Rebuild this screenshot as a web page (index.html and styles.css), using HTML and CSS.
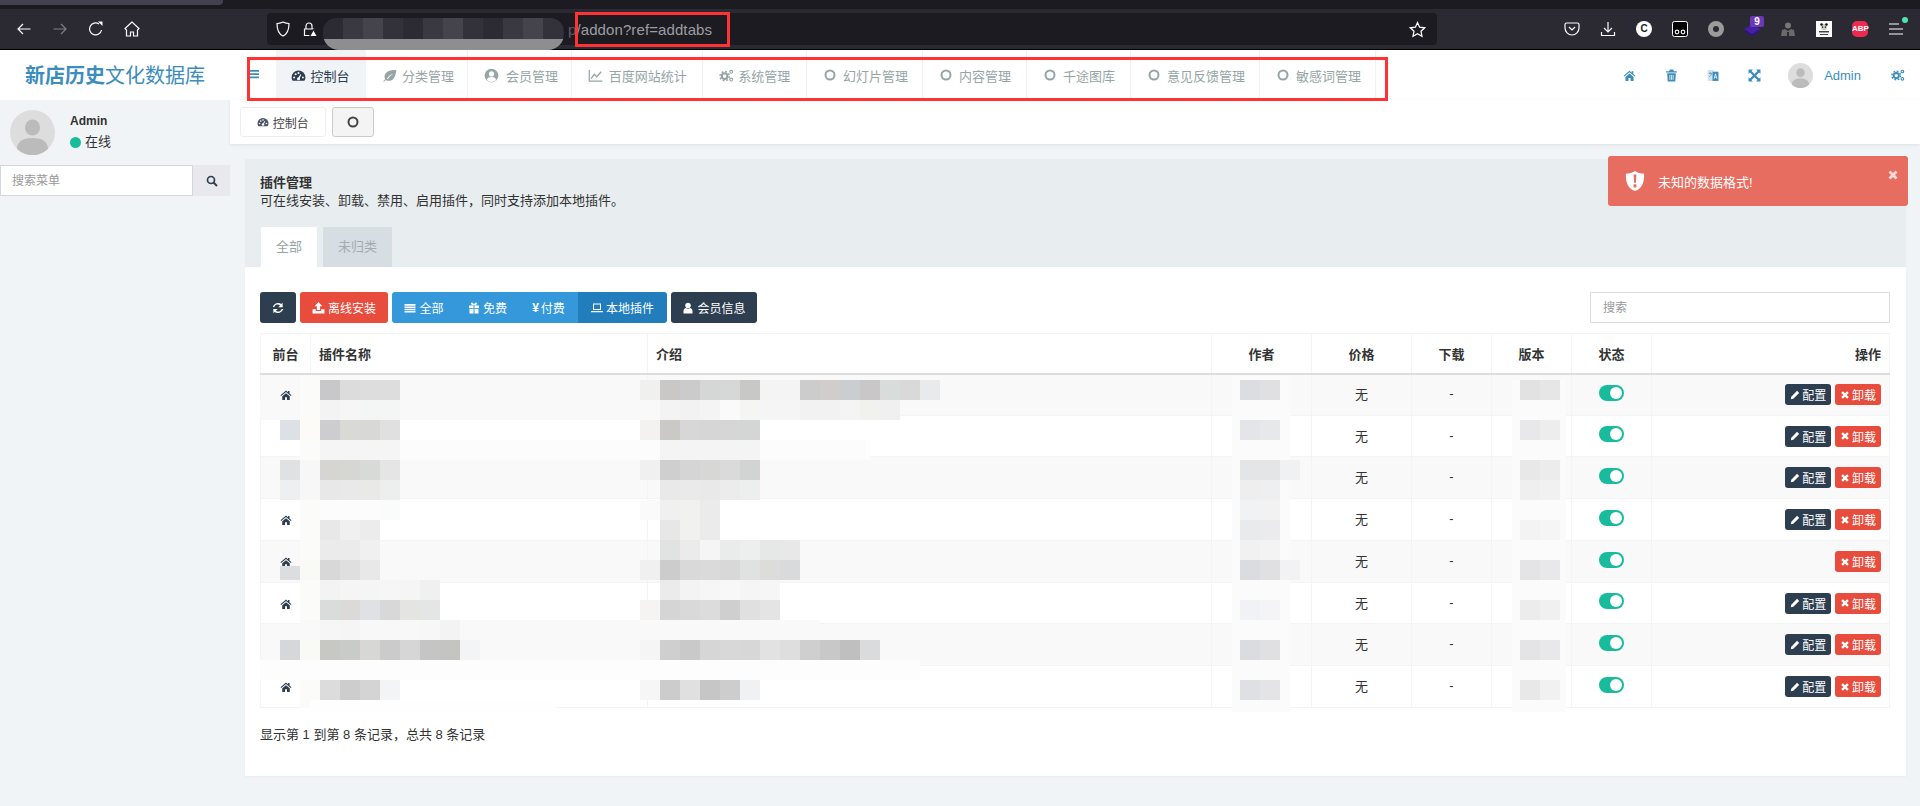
FILE: index.html
```html
<!DOCTYPE html>
<html lang="zh-CN">
<head>
    <meta charset="UTF-8">
    <title>插件管理</title>
    <link rel="stylesheet" href="styles.css">
</head>
<body>
    <!-- icon sprites -->
    <svg class="sprites" xmlns="http://www.w3.org/2000/svg">
        <symbol id="i-dashboard" viewBox="0 0 24 24"><path d="M12 4A11 11 0 0 0 1 15c0 2.300.7 4.200 1.800 5.500h18.400C22.300 19.200 23 17.300 23 15A11 11 0 0 0 12 4z"/><g fill="#fff"><circle cx="5" cy="15" r="1.600"/><circle cx="7.500" cy="10" r="1.600"/><circle cx="12" cy="8" r="1.600"/><circle cx="19" cy="15" r="1.600"/><circle cx="12" cy="17" r="2.400"/><path d="M11 17l4-7 1.500.7L13 18z"/></g></symbol>
        <symbol id="i-leaf" viewBox="0 0 24 24"><path d="M23 3C12 3 4 6 4 14c0 1.500.4 2.800 1 4l-3 3 1 1 3-3c1.500 1 3.200 1.500 5 1.500C19 20.500 22 12 23 3zM8 17c2-4 5-6.500 10-8-4 2.500-7 5-8.500 9z"/></symbol>
        <symbol id="i-user-circle" viewBox="0 0 24 24"><circle cx="12" cy="12" r="11"/><circle cx="12" cy="9.500" r="4.200" fill="#fff"/><path d="M4.500 19c1-3.500 4-4.500 7.500-4.500s6.500 1 7.500 4.500a10 10 0 0 1-15 0z" fill="#fff"/></symbol>
        <symbol id="i-chart" viewBox="0 0 24 24"><path d="M1 3h2v17h20v2H1z"/><path d="M5 17l5-7 4 4 7-8" fill="none" stroke="currentColor" stroke-width="2.200"/></symbol>
        <symbol id="i-cogs" viewBox="0 0 24 24"><g fill="none" stroke="currentColor"><circle cx="9" cy="13" r="4.500" stroke-width="3.200"/><circle cx="9" cy="13" r="7.400" stroke-width="2.400" stroke-dasharray="3 2.800"/><circle cx="19.500" cy="6" r="2.300" stroke-width="1.800"/><circle cx="19.500" cy="18.500" r="2.300" stroke-width="1.800"/></g></symbol>
        <symbol id="i-circle" viewBox="0 0 24 24"><circle cx="12" cy="12" r="9" fill="none" stroke="currentColor" stroke-width="4"/></symbol>
        <symbol id="i-home" viewBox="0 0 24 24"><path d="M12 3 1 12.500l1.300 1.500L12 6l9.700 8 1.300-1.500-4-3.400V4h-3v2.700z"/><path d="M4.500 14.700V22H10v-5.500h4V22h5.500v-7.300L12 8.300z"/></symbol>
        <symbol id="i-trash" viewBox="0 0 24 24"><path d="M9 1h6l1.500 3H22v2.500H2V4h5.500zM4 8h16l-1 15H5z"/><path d="M9 11v9M12 11v9M15 11v9" stroke="#fff" stroke-width="1.400"/></symbol>
        <symbol id="i-translate" viewBox="0 0 24 24"><path d="M3 2h11l5 20H8l-5-1z" fill="#cfe2ef"/><path d="M12 5h11v17H12z"/><path d="M15 18l2.500-9 2.500 9M16 15h3" fill="none" stroke="#fff" stroke-width="1.400"/><path d="M5 8h6M8 6v2M6 14c2.500-1 4-3 4-6" fill="none" stroke="#3c8dbc" stroke-width="1.300"/></symbol>
        <symbol id="i-expand" viewBox="0 0 24 24"><path d="M1 1h8L6.500 3.500 12 9l5.500-5.500L15 1h8v8l-2.500-2.500L15 12l5.500 5.500L23 15v8h-8l2.500-2.500L12 15l-5.500 5.500L9 23H1v-8l2.500 2.500L9 12 3.500 6.500 1 9z"/></symbol>
        <symbol id="i-refresh" viewBox="0 0 24 24"><path d="M20 3v7.500h-7.500l3-3a6 6 0 0 0-9.800 2.800H3A9.500 9.500 0 0 1 17.800 5.200zM4 21v-7.500h7.500l-3 3a6 6 0 0 0 9.800-2.800H21A9.500 9.500 0 0 1 6.200 18.800z"/></symbol>
        <symbol id="i-upload" viewBox="0 0 24 24"><path d="M12 2l7 7.500h-4v7H9v-7H5z"/><path d="M1 15h6v3.500h10V15h6v8H1z"/></symbol>
        <symbol id="i-list" viewBox="0 0 24 24"><path d="M1 4h22v3.500H1zM1 9h22v3H1zM1 13.500h22v3H1zM1 18h22v3H1z"/></symbol>
        <symbol id="i-gift" viewBox="0 0 24 24"><path d="M2 7h9v5H2zM13 7h9v5h-9zM3 13.500h8V23H3zM13 13.500h8V23h-8z"/><path d="M8 1c2 0 3.500 2 4 5 .5-3 2-5 4-5s3 2 1 4l-1.500 1.500h-7L7 5C5 3 6 1 8 1z"/></symbol>
        <symbol id="i-laptop" viewBox="0 0 24 24"><path d="M4 3h16v13H4zm2 2v9h12V5zM0 18h24v2.500H0z" fill-rule="evenodd"/></symbol>
        <symbol id="i-user" viewBox="0 0 24 24"><circle cx="12" cy="7" r="5.500"/><path d="M3 23v-5c0-3.500 2.500-5.500 5-6 2.500 2 5.500 2 8 0 2.500.5 5 2.500 5 6v5z"/></symbol>
        <symbol id="i-pencil" viewBox="0 0 24 24"><path d="M17 2l5 5L8 21l-6 1 1-6z"/></symbol>
        <symbol id="i-times" viewBox="0 0 24 24"><path d="M7 3l5 5 5-5 4 4-5 5 5 5-4 4-5-5-5 5-4-4 5-5-5-5z"/></symbol>
        <symbol id="i-search" viewBox="0 0 24 24"><circle cx="10" cy="10" r="7" fill="none" stroke="currentColor" stroke-width="3.400"/><path d="M15 15l7 7" stroke="currentColor" stroke-width="4"/></symbol>
        <symbol id="i-bars" viewBox="0 0 24 24"><path d="M2 4h20v3.500H2zM2 10.500h20V14H2zM2 17h20v3.500H2z"/></symbol>
        <symbol id="i-shield" viewBox="0 0 24 24"><path d="M12 1c3 2 6 3 10 3 0 10-2 16-10 19C4 20 2 14 2 4c4 0 7-1 10-3z"/></symbol>
    </svg>

    <!-- browser chrome -->
    <div class="browser">
        <div class="tabstrip"><div class="tab-piece"></div></div>
        <div class="toolbar">
            <div class="tool-btn">
                <svg class="ff" viewBox="0 0 16 16"><path d="M14.500 8H2M7 3 2 8l5 5"/></svg>
            </div>
            <div class="tool-btn dim">
                <svg class="ff" viewBox="0 0 16 16"><path d="M1.500 8H14M9 3l5 5-5 5"/></svg>
            </div>
            <div class="tool-btn">
                <svg class="ff" viewBox="0 0 16 16"><path d="M13.500 9A6 6 0 1 1 11 3"/><path d="M10 .5h4.500V5z" class="solid"/></svg>
            </div>
            <div class="tool-btn">
                <svg class="ff" viewBox="0 0 16 16"><path d="M8 1 1 7.500 2.500 9V15h4v-4h3v4h4V9L15 7.500z"/></svg>
            </div>
            <div class="urlbar">
                <svg class="ff url-icon" viewBox="0 0 16 16"><path d="M8 1c2 1 4 1.500 6 1.500C14 9 12.500 13 8 15 3.500 13 2 9 2 2.500 4 2.500 6 2 8 1z"/></svg>
                <svg class="ff url-icon" viewBox="0 0 16 16"><path d="M4 8V5a3 3 0 0 1 6 0v3M2.500 8h9v6.500h-9z"/><path d="M11.500 8.500l4 7h-8z" class="warn"/></svg>
                <div class="url-blur"><div class="url-blur-top"></div><div class="url-blur-low"></div></div>
                <span class="url-text"><span class="url-dim">p</span>/addon?ref=addtabs</span>
                <svg class="ff url-star" viewBox="0 0 16 16"><path d="M8 1.500l2 4.300 4.700.6-3.400 3.200.9 4.700L8 12l-4.200 2.300.9-4.700L1.300 6.400 6 5.800z"/></svg>
            </div>
            <div class="addons">
                <div class="tool-btn"><svg class="ff" viewBox="0 0 16 16"><path d="M2.500 2h11A1.500 1.500 0 0 1 15 3.500V7A7 7 0 0 1 1 7V3.500A1.500 1.500 0 0 1 2.500 2zM5 6l3 3 3-3"/></svg></div>
                <div class="tool-btn"><svg class="ff" viewBox="0 0 16 16"><path d="M8 1v10M4 7l4 4 4-4M1.500 11v3.500h13V11"/></svg></div>
                <div class="tool-btn"><span class="addon-c">C</span></div>
                <div class="tool-btn"><svg viewBox="0 0 16 16" width="16" height="16"><rect x=".5" y=".5" width="15" height="15" rx="2" fill="#000" stroke="#fff"/><g fill="none" stroke="#eee" stroke-width="1.200"><circle cx="5" cy="11" r="1.800"/><circle cx="11" cy="11" r="1.800"/></g></svg></div>
                <div class="tool-btn"><span class="addon-ring"></span></div>
                <div class="tool-btn"><svg viewBox="0 0 16 16" width="16" height="16"><path d="M0 8l8-4 8 4-8 5z" fill="#4420a8"/><path d="M0 10.500l2-1 6 3.500 6-3.500 2 1L8 15z" fill="#30128a"/></svg><span class="addon-badge">9</span></div>
                <div class="tool-btn"><svg viewBox="0 0 16 16" width="16" height="16"><circle cx="8" cy="4.500" r="3" fill="#777"/><path d="M1 15l1-6 3-1 3 2 3-2 3 1 1 6H9V11H7v4z" fill="#6a6a6a"/></svg></div>
                <div class="tool-btn"><svg viewBox="0 0 16 16" width="16" height="16"><rect width="16" height="16" fill="#fff"/><circle cx="8" cy="6" r="3.200" fill="#ccc"/><circle cx="5.500" cy="3.500" r="1.300" fill="#111"/><circle cx="10.500" cy="3.500" r="1.300" fill="#111"/><path d="M6 5.500h1.200v1.200H6zM8.800 5.500H10v1.200H8.800z" fill="#111"/><path d="M3 10h10v1.500H3zM4 13h8v1H4z" fill="#444"/></svg></div>
                <div class="tool-btn"><span class="addon-abp">ABP</span></div>
                <div class="tool-btn"><svg class="ff" viewBox="0 0 16 16"><path d="M1 3h10M1 8h14M1 13h14"/></svg><span class="addon-dot"></span></div>
            </div>
        </div>
    </div>

    <div class="app">
        <aside class="sidebar">
            <div class="logo"><b>新店历史</b>文化数据库</div>
            <div class="user-panel">
                <svg class="avatar-lg" viewBox="0 0 45 45"><circle cx="22.500" cy="22.500" r="22.500" fill="#ddd"/><ellipse cx="22.500" cy="17.500" rx="7.500" ry="8" fill="#bbb"/><path d="M7 39c0-8 7-11 15.500-11S38 31 38 39a22.500 22.500 0 0 1-31 0z" fill="#bbb"/></svg>
                <div class="user-info">
                    <div class="user-name">Admin</div>
                    <div class="user-status"><span class="dot"></span>在线</div>
                </div>
            </div>
            <div class="menu-search">
                <input type="text" placeholder="搜索菜单">
                <button><svg class="icon"><use href="#i-search"/></svg></button>
            </div>
        </aside>

        <main class="main">
            <header class="topbar">
                <div class="toggle"><svg class="icon"><use href="#i-bars"/></svg></div>
                <ul class="nav">
                    <li class="active"><svg class="icon"><use href="#i-dashboard"/></svg>控制台</li>
                    <li><svg class="icon"><use href="#i-leaf"/></svg>分类管理</li>
                    <li class="member"><svg class="icon"><use href="#i-user-circle"/></svg>会员管理</li>
                    <li class="wide"><svg class="icon"><use href="#i-chart"/></svg>百度网站统计</li>
                    <li class="system"><svg class="icon"><use href="#i-cogs"/></svg>系统管理</li>
                    <li class="o"><svg class="icon"><use href="#i-circle"/></svg>幻灯片管理</li>
                    <li class="o four"><svg class="icon"><use href="#i-circle"/></svg>内容管理</li>
                    <li class="o four"><svg class="icon"><use href="#i-circle"/></svg>千途图库</li>
                    <li class="o"><svg class="icon"><use href="#i-circle"/></svg>意见反馈管理</li>
                    <li class="o"><svg class="icon"><use href="#i-circle"/></svg>敏感词管理</li>
                </ul>
                <div class="top-right">
                    <span class="top-btn"><svg class="icon"><use href="#i-home"/></svg></span>
                    <span class="top-btn"><svg class="icon"><use href="#i-trash"/></svg></span>
                    <span class="top-btn"><svg class="icon"><use href="#i-translate"/></svg></span>
                    <span class="top-btn"><svg class="icon"><use href="#i-expand"/></svg></span>
                    <svg class="avatar-sm" viewBox="0 0 45 45"><circle cx="22.500" cy="22.500" r="22.500" fill="#ddd"/><ellipse cx="22.500" cy="17.500" rx="7.500" ry="8" fill="#bbb"/><path d="M7 39c0-8 7-11 15.500-11S38 31 38 39a22.500 22.500 0 0 1-31 0z" fill="#bbb"/></svg>
                    <span class="top-name">Admin</span>
                    <span class="top-cogs"><svg class="icon"><use href="#i-cogs"/></svg></span>
                </div>
            </header>

            <div class="pagetabs">
                <div class="pagetab"><svg class="icon"><use href="#i-dashboard"/></svg>控制台</div>
                <div class="pagetab current"><svg class="icon"><use href="#i-circle"/></svg></div>
            </div>

            <section class="panel">
                <div class="panel-head">
                    <div class="panel-title">插件管理</div>
                    <div class="panel-desc">可在线安装、卸载、禁用、启用插件&#xFF0C;同时支持添加本地插件。</div>
                    <div class="panel-tabs">
                        <div class="panel-tab active">全部</div>
                        <div class="panel-tab">未归类</div>
                    </div>
                </div>
                <div class="panel-body">
                    <div class="actions">
                        <button class="btn btn-dark btn-refresh"><svg class="icon"><use href="#i-refresh"/></svg></button>
                        <button class="btn btn-red"><svg class="icon"><use href="#i-upload"/></svg>离线安装</button>
                        <div class="btn-group">
                            <button class="btn btn-blue"><svg class="icon"><use href="#i-list"/></svg>全部</button>
                            <button class="btn btn-blue"><svg class="icon"><use href="#i-gift"/></svg>免费</button>
                            <button class="btn btn-blue"><b class="yen">¥</b>付费</button>
                            <button class="btn btn-blue current"><svg class="icon"><use href="#i-laptop"/></svg>本地插件</button>
                        </div>
                        <button class="btn btn-dark"><svg class="icon"><use href="#i-user"/></svg>会员信息</button>
                        <input class="table-search" type="text" placeholder="搜索">
                    </div>

                    <table class="addons-table">
                        <colgroup>
                            <col class="c-front"><col class="c-name"><col class="c-intro"><col class="c-author">
                            <col class="c-price"><col class="c-down"><col class="c-ver"><col class="c-state"><col class="c-ops">
                        </colgroup>
                        <thead>
                            <tr>
                                <th>前台</th><th class="left">插件名称</th><th class="left">介绍</th><th>作者</th>
                                <th>价格</th><th>下载</th><th>版本</th><th>状态</th><th class="right">操作</th>
                            </tr>
                        </thead>
                        <tbody id="addonRows"></tbody>
                    </table>
                    <div class="summary">显示第 1 到第 8 条记录&#xFF0C;总共 8 条记录</div>
                </div>
            </section>
        </main>
    </div>

    <!-- things lying over the page: redaction, annotations, toast -->
    <div class="redaction" id="redaction"></div>
    <div class="mark mark-url"></div>
    <div class="mark mark-nav"></div>
    <div class="toast">
        <svg class="toast-icon" viewBox="0 0 24 24"><use href="#i-shield"/><path d="M10.500 5h3l-.5 9h-2zM10.500 15.500h3V19h-3z" fill="#e76d60"/></svg>
        <span>未知的数据格式!</span>
        <svg class="toast-close"><use href="#i-times"/></svg>
    </div>

    <script src="script.js"></script>
</body>
</html>
```

FILE: styles.css
```css
* {
    box-sizing: border-box;
}
html, body {
    height: 100%;
}
body {
    margin: 0;
    overflow: hidden;
    position: relative;
    background-color: #f1f4f6;
    color: #333;
    font-family: "Liberation Sans", "Noto Sans CJK SC", sans-serif;
    font-size: 13px;
}
.sprites {
    display: none;
}
.icon {
    width: 14px;
    height: 14px;
    fill: currentColor;
    flex: none;
}

/* browser chrome */
.browser {
    height: 50px;
    background-color: #2b2a33;
}
.tabstrip {
    height: 9px;
    background-color: #1c1b22;
}
.tab-piece {
    width: 223px;
    height: 5px;
    margin-left: 0;
    background-color: #42414d;
    border-radius: 0 0 4px 0;
}
.toolbar {
    display: flex;
    align-items: center;
    height: 41px;
    padding: 0 6px;
    border-bottom: 1px solid #000;
    position: relative;
}
.tool-btn {
    width: 36px;
    height: 32px;
    display: flex;
    align-items: center;
    justify-content: center;
    flex: none;
    position: relative;
}
.tool-btn.dim {
    opacity: .4;
}
.ff {
    width: 16px;
    height: 16px;
    fill: none;
    stroke: #fbfbfe;
    stroke-width: 1.2;
}
.ff .solid {
    fill: #fbfbfe;
    stroke: none;
}
.ff .warn {
    fill: #fbfbfe;
    stroke: #1c1b22;
}
.urlbar {
    width: 1170px;
    height: 32px;
    margin-left: 117px;
    padding: 0 8px;
    display: flex;
    align-items: center;
    background-color: #1c1b22;
    border-radius: 4px;
    position: relative;
    flex: none;
}
.url-icon {
    margin-right: 11px;
}
.url-icon + .url-icon {
    margin-right: 0;
}
.url-blur {
    width: 241px;
    height: 32px;
    margin: 5px 0 0 5px;
    align-self: flex-start;
    border-radius: 14px 14px 16px 16px;
    overflow: hidden;
    flex: none;
}
.url-blur-top {
    height: 21px;
    background: repeating-linear-gradient(90deg, #2c2b33 0 20px, #3a3941 20px 40px, #45444c 40px 60px, #33323a 60px 80px);
}
.url-blur-low {
    height: 11px;
    background-color: #8e8e90;
}
.url-text {
    margin-left: 4px;
    color: #9d9da1;
    font-size: 15px;
    letter-spacing: .1px;
}
.url-dim {
    color: #5e5d64;
}
.url-star {
    margin-left: auto;
    width: 17px;
    height: 17px;
    margin-right: 3px;
}
.addons {
    display: flex;
    margin-left: 117px;
    flex: none;
}
.addon-c {
    width: 16px;
    height: 16px;
    border-radius: 50%;
    background-color: #fff;
    color: #222;
    font-size: 10px;
    font-weight: bold;
    line-height: 16px;
    text-align: center;
}
.addon-ring {
    width: 16px;
    height: 16px;
    border-radius: 50%;
    border: 5px solid #9b9b9b;
}
.addon-badge {
    position: absolute;
    top: 3px;
    left: 16px;
    width: 14px;
    height: 11px;
    border-radius: 2px;
    background-color: #6a38b8;
    color: #fff;
    font-size: 10px;
    font-weight: bold;
    line-height: 11px;
    text-align: center;
}
.addon-abp {
    width: 16px;
    height: 16px;
    border-radius: 5px;
    background-color: #ee2a4f;
    color: #fff;
    font-size: 8px;
    font-weight: bold;
    line-height: 16px;
    text-align: center;
}
.addon-dot {
    position: absolute;
    top: 4px;
    right: 6px;
    width: 6px;
    height: 6px;
    border-radius: 50%;
    background-color: #50e3b0;
}

/* app layout */
.app {
    display: flex;
    height: 756px;
}
.sidebar {
    width: 230px;
    flex: none;
}
.logo {
    height: 50px;
    background-color: #fff;
    color: #3c8dbc;
    font-size: 20px;
    line-height: 52px;
    text-align: center;
}
.user-panel {
    display: flex;
    padding: 10px;
    height: 65px;
}
.avatar-lg {
    width: 45px;
    height: 45px;
    flex: none;
}
.user-info {
    margin-left: 15px;
}
.user-name {
    margin-top: 2px;
    font-size: 12px;
    font-weight: bold;
    line-height: 18px;
}
.user-status {
    display: flex;
    align-items: center;
    margin-top: 3px;
    line-height: 18px;
}
.dot {
    width: 11px;
    height: 11px;
    margin-right: 4px;
    border-radius: 50%;
    background-color: #18bc9c;
}
.menu-search {
    display: flex;
    height: 31px;
}
.menu-search input {
    width: 193px;
    height: 31px;
    padding: 0 11px;
    border: 1px solid #d2d6de;
    background-color: #fff;
    font: inherit;
    font-size: 12px;
}
.menu-search button {
    width: 37px;
    border: 0;
    background-color: #e9e9ed;
    color: #2c3e50;
    display: flex;
    align-items: center;
    justify-content: center;
}
.menu-search .icon {
    width: 12px;
    height: 12px;
}
::placeholder {
    color: #999;
}

.main {
    flex: 1;
    min-width: 0;
}
.topbar {
    height: 50px;
    display: flex;
    background-color: #fff;
}
.toggle {
    width: 45.500px;
    padding: 18px 0 0 18px;
    color: #3c8dbc;
    flex: none;
}
.toggle .icon {
    width: 12px;
    height: 12px;
}
.nav {
    display: flex;
    margin: 0;
    padding: 0;
    list-style: none;
}
.nav li {
    display: flex;
    align-items: center;
    padding: 0 13px 0 16px;
    border-right: 1px solid #f1f1f1;
    color: #95a5a6;
    font-size: 13px;
}
.nav li .icon {
    width: 15px;
    height: 15px;
    margin-right: 5px;
}
.nav li.member .icon {
    margin-right: 7px;
}
.nav li.member {
    padding-right: 13px;
}
.nav li.wide .icon {
    margin-right: 5.700px;
}
.nav li.wide {
    padding-right: 14.800px;
}
.nav li.system .icon {
    margin-right: 4.800px;
}
.nav li.system {
    padding-right: 15.200px;
}
.nav li.o {
    padding: 0 13.600px 0 17px;
}
.nav li.o.four {
    padding-right: 14.600px;
}
.nav li.o .icon {
    width: 12px;
    height: 12px;
    margin-right: 7.400px;
}
.nav li.active {
    width: 90.500px;
    padding: 0 0 0 15px;
    border-right: 0;
    background-color: #f1f4f6;
    color: #2c3e50;
}
.top-right {
    display: flex;
    align-items: center;
    margin-left: auto;
    padding-right: 15px;
    color: #3c8dbc;
}
.top-btn {
    width: 41.500px;
    display: flex;
    justify-content: center;
}
.top-btn .icon {
    width: 13px;
    height: 13px;
}
.avatar-sm {
    width: 25px;
    height: 25px;
    margin-left: 13px;
}
.top-name {
    margin-left: 11px;
    font-size: 13px;
}
.top-cogs {
    display: flex;
    margin-left: 30px;
}

.pagetabs {
    display: flex;
    gap: 6px;
    height: 44px;
    padding: 7px 10px;
    background-color: #fff;
    box-shadow: 0 1px 3px rgba(0, 0, 0, .08);
    position: relative;
}
.pagetab {
    display: flex;
    align-items: center;
    justify-content: center;
    width: 85.500px;
    border: 1px solid #eee;
    border-radius: 3px;
    color: #444;
    font-size: 12px;
}
.pagetab .icon {
    width: 12px;
    height: 12px;
    margin-right: 4px;
    color: #4b5568;
}
.pagetab.current {
    width: 42px;
    border-color: #ccc;
    background-color: #f4f4f4;
}
.pagetab.current .icon {
    margin: 0;
    color: #444;
}

/* panel */
.panel {
    height: 617px;
    margin: 15px 14px 0 15px;
    background-color: #fff;
    box-shadow: 0 1px 2px rgba(0, 0, 0, .03);
}
.panel-head {
    height: 108px;
    padding: 15px 15px 0;
    background-color: #e8edf0;
}
.panel-title {
    font-weight: bold;
    line-height: 18px;
}
.panel-desc {
    line-height: 18px;
}
.panel-tabs {
    display: flex;
    gap: 6px;
    margin-top: 17px;
    margin-left: 1px;
}
.panel-tab {
    height: 40px;
    padding: 0 15px;
    line-height: 40px;
    background-color: #d6dde3;
    color: #a3acb0;
}
.panel-tab.active {
    background-color: #fff;
    color: #95a5a6;
}
.panel-body {
    padding: 25px 16px 0 15px;
}
.actions {
    display: flex;
    gap: 4px;
    height: 31px;
}
.btn {
    display: inline-flex;
    align-items: center;
    justify-content: center;
    height: 31px;
    padding: 0;
    border: 0;
    border-radius: 3px;
    color: #fff;
    font: inherit;
    font-size: 12px;
}
.btn .icon {
    width: 12px;
    height: 12px;
    margin-right: 3px;
}
.btn-dark {
    width: 86px;
    background-color: #2c3e50;
}
.btn-refresh {
    width: 36px;
}
.btn-refresh .icon {
    width: 14px;
    height: 14px;
    margin: 0;
}
.btn-red {
    width: 88px;
    background-color: #e74c3c;
}
.btn-red .icon {
    width: 13px;
    height: 13px;
}
.btn-group {
    display: flex;
}
.btn-blue {
    width: 64px;
    background-color: #3498db;
    border-radius: 0;
}
.btn-blue:first-child {
    border-radius: 3px 0 0 3px;
}
.btn-blue:nth-child(2) {
    width: 63px;
}
.btn-blue:nth-child(3) {
    width: 59px;
}
.btn-blue.current {
    width: 89px;
    background-color: #217dbb;
    border-radius: 0 3px 3px 0;
}
.yen {
    margin-right: 2px;
}
.table-search {
    width: 300px;
    height: 31px;
    margin-left: auto;
    padding: 0 12px;
    border: 1px solid #ddd;
    font: inherit;
    font-size: 12px;
}
.addons-table {
    width: 1629.500px;
    margin-top: 10px;
    border-collapse: collapse;
    table-layout: fixed;
}
.c-front { width: 50px; }
.c-name { width: 337px; }
.c-intro { width: 564px; }
.c-author { width: 100px; }
.c-price { width: 100px; }
.c-down { width: 80px; }
.c-ver { width: 80px; }
.c-state { width: 80px; }
.c-ops { width: 238px; }
.addons-table th,
.addons-table td {
    padding: 0 8px;
    border: 1px solid #f4f4f4;
    text-align: center;
}
.addons-table td {
    padding-bottom: 2px;
}
.addons-table td.ops {
    padding-bottom: 0;
}
.addons-table th {
    height: 40px;
    border-bottom: 2px solid #ddd;
    font-weight: bold;
}
.addons-table th.left {
    text-align: left;
}
.addons-table th.right,
.addons-table td.ops {
    text-align: right;
}
.addons-table tbody tr {
    height: 42px;
}
.addons-table tbody tr:nth-child(2),
.addons-table tbody tr:nth-child(6) {
    height: 41px;
}
.addons-table tbody tr:nth-child(odd) {
    background-color: #f9f9f9;
}
.home-link {
    display: inline-flex;
    color: #2c3e50;
    vertical-align: -3px;
}
.home-link .icon {
    width: 12px;
    height: 12px;
}
.switch {
    display: inline-block;
    position: relative;
    width: 25px;
    height: 16px;
    margin-bottom: 2px;
    border-radius: 8px;
    background-color: #18bc9c;
    vertical-align: middle;
}
.switch::after {
    content: "";
    position: absolute;
    top: 2px;
    right: 2px;
    width: 12px;
    height: 12px;
    border-radius: 50%;
    background-color: #fff;
}
.btn-xs {
    width: 46px;
    height: 21px;
    vertical-align: middle;
}
.btn-xs .icon {
    width: 10px;
    height: 10px;
    margin-right: 2px;
}
.summary {
    margin-top: 18px;
    line-height: 18px;
}

/* overlays */
.redaction {
    position: absolute;
    top: 0;
    left: 0;
    width: 0;
    height: 0;
}
.redaction div {
    position: absolute;
}
.mark {
    position: absolute;
    border: 3px solid #ff3333;
}
.mark-url {
    left: 575px;
    top: 12px;
    width: 155px;
    height: 35px;
}
.mark-nav {
    left: 247px;
    top: 57px;
    width: 1141px;
    height: 44px;
}
.toast {
    position: absolute;
    left: 1608px;
    top: 156px;
    width: 300px;
    height: 50px;
    display: flex;
    align-items: center;
    padding-left: 16px;
    border-radius: 3px;
    background-color: #e76d60;
    color: #fff;
}
.toast-icon {
    width: 22px;
    height: 24px;
    margin-right: 12px;
    fill: #fff;
}
.toast-close {
    position: absolute;
    top: 13px;
    right: 9px;
    width: 12px;
    height: 12px;
    fill: #fff;
    opacity: .75;
}
```

FILE: script.js
```js
// table rows: which have a front link and which can be configured
const addons = [
    { home: true, config: true },
    { home: false, config: true },
    { home: false, config: true },
    { home: true, config: true },
    { home: true, config: false },
    { home: true, config: true },
    { home: false, config: true },
    { home: true, config: true }
];

function renderRows() {
    const body = document.getElementById('addonRows');
    body.innerHTML = addons.map(a => `
        <tr>
            <td>${a.home ? '<span class="home-link"><svg class="icon"><use href="#i-home"/></svg></span>' : ''}</td>
            <td></td>
            <td></td>
            <td></td>
            <td>无</td>
            <td>-</td>
            <td></td>
            <td><span class="switch"></span></td>
            <td class="ops">
                ${a.config ? '<button class="btn btn-dark btn-xs"><svg class="icon"><use href="#i-pencil"/></svg>配置</button>' : ''}
                <button class="btn btn-red btn-xs"><svg class="icon"><use href="#i-times"/></svg>卸载</button>
            </td>
        </tr>`).join('');
}

// pale smears over the table: x, y, w, h, colour
const smears = [
    [260, 400, 604, 20, 'f9f9f9'],
    [320, 440, 550, 20, 'fcfcfc'],
    [300, 376, 20, 332, 'fbfbf9'],
    [300, 620, 520, 20, 'f9f9f9'],
    [260, 660, 660, 20, 'fdfdfd'],
    [310, 700, 245, 12, 'fefefe'],
    [1232, 376, 58, 336, 'fbfbfb'],
    [1512, 380, 54, 332, 'fbfbfb'],
    [280, 566, 20, 14, 'dcdde0']
];

// 20px mosaic tiles, one line per start: y, x, colours
const tiles = [
    [380, 320, ['c8c8cb', 'dcdcdc', 'dddddd', 'dddddd']],
    [380, 640, ['f0f0ee', 'c9c8c6', 'cbcbcb', 'd5d6d6', 'd6d8d8', 'c8c8c5', 'f4f4f4', 'f4f4f4', 'cccccc', 'd0cdca', 'cbced1', 'c9c7c8', 'd8dcda', 'd9d9d9', 'e9eaec']],
    [380, 1240, ['dcdde1', 'e0e0e2']],
    [380, 1520, ['e2e2e2', 'e6e6e6']],
    [400, 320, ['f3f3f3', 'f5f6f5', 'f4f6f5', 'f4f6f5']],
    [400, 660, ['f3f3f3', 'f2f2f2', 'f4f4f4', 'fafafa', 'f5f5f3', 'f5f5f5', 'f5f5f5', 'f2f2f2', 'f2f2f2', 'f4f4f4', 'f1f1ee', 'f0f0f0']],
    [420, 280, ['dde0e4', 'fdfbf8', 'cdcdd0', 'd9d9d6', 'd8d8d6', 'e0e0e0']],
    [420, 640, ['f4f1f1', 'cbc9c6', 'd7d7d7', 'd6d6d6', 'd6d6d6', 'd4d5d5']],
    [420, 1240, ['e4e5e9', 'e7e8ea']],
    [420, 1520, ['e8e8ea', 'ededed']],
    [440, 320, ['f5f5f5', 'f5f5f5', 'f5f5f5', 'f5f5f5']],
    [440, 660, ['f4f4f4', 'f4f4f4', 'f4f4f4', 'f4f4f4', 'f4f4f4']],
    [460, 280, ['e0e1e3', 'f7f7f7', 'd6d5d2', 'd6d6d3', 'd8dad8', 'e5e5e5']],
    [460, 640, ['f0f0f0', 'cfcfcf', 'd5d5d5', 'd7d7d6', 'dadada', 'd2d4d3']],
    [460, 1240, ['e4e5e7', 'e4e5e7', 'f0f1f3']],
    [460, 1520, ['e8e8e8', 'ececec']],
    [480, 280, ['eeeff1', 'f7f7f7', 'e8e8e8', 'e9e9e9', 'e9eae8', 'edefee']],
    [480, 660, ['e9e9e9', 'eaeaea', 'e9e9e9', 'ececec', 'edefee']],
    [480, 1240, ['eeeeee', 'eeeff0']],
    [480, 1520, ['efefef', 'f1f1f1']],
    [500, 320, ['fcfcfc', 'fcfcfc', 'fcfcfc', 'fafcfb']],
    [500, 640, ['fafafa', 'eff0ef', 'f1f1ef', 'ebebec']],
    [500, 1240, ['f1f2f3', 'f2f2f3']],
    [520, 320, ['e8e8e8', 'f0f0f0', 'ececec']],
    [520, 660, ['e6e7e6', 'f1f1f0', 'ebebec']],
    [520, 1240, ['e9eaeb', 'ebebed']],
    [520, 1520, ['f3f3f3', 'f5f5f5']],
    [540, 320, ['ebebeb', 'ebebeb', 'f0f0f0']],
    [540, 660, ['e1e2e2', 'ebebeb', 'f5f5f5', 'e9ecea', 'ecefee', 'e6e7e7', 'e8e8e8']],
    [540, 1240, ['f1f1f1', 'f3f3f3']],
    [560, 300, ['f9f9f6', 'd8d8d8', 'dfdfdf', 'e8e8e8']],
    [560, 640, ['f0f0f0', 'cccccc', 'd9d9d9', 'dadada', 'd8d8d8', 'e0e2e1', 'dcdcda', 'd8dadc']],
    [560, 1240, ['dbdce0', 'e0e0e3', 'f2f2f4']],
    [560, 1520, ['e4e4e6', 'e8e8ea']],
    [580, 320, ['f3f3f3', 'f5f5f5', 'f5f5f5', 'f6f6f6', 'f5f5f5', 'f0f0f0']],
    [580, 660, ['ebebeb', 'f3f3f3', 'f6f6f6', 'f8f8f8', 'f5f5f5', 'f6f6f6']],
    [600, 320, ['d8dcda', 'dcdad8', 'dfe1e4', 'd8d8d8', 'e4e4e1', 'e3e6e4']],
    [600, 640, ['f5f4f2', 'd5d5d5', 'd9d9d9', 'dcdcdc', 'cfcfcf', 'e0e0e0', 'e4e4e4']],
    [600, 1240, ['f1f2f5', 'f4f4f6']],
    [600, 1520, ['ececec', 'f0f0f0']],
    [620, 320, ['f6f6f6', 'f5f5f5', 'f8f8f8', 'f8f8f8', 'f8f8f8', 'f7f7f7', 'f3f3f3']],
    [640, 280, ['d6d7da', 'f9f9f6', 'c7c7c4', 'c9cbc9', 'd7d7d4', 'cbcbcb', 'd6d6d6', 'c5c5c5', 'c4c4c1', 'f3f4f6']],
    [640, 640, ['f5f5f5', 'cfcfcf', 'c9c9c9', 'd6d6d6', 'd8d8d8', 'd7d7d7', 'e2e2e2', 'dedede', 'cfcfcf', 'c8c8c8', 'bfbfbf', 'dadbdd']],
    [640, 1240, ['dbdce0', 'e0e0e3']],
    [640, 1520, ['e4e4e6', 'e8e8ea']],
    [680, 320, ['dcdcdc', 'cdcdcd', 'd4d4d4', 'f3f4f6']],
    [680, 640, ['f6f6f6', 'cccccc', 'e0e0e0', 'c6c6c6', 'cdcdcd', 'f0f1f3']],
    [680, 1240, ['dfe0e4', 'e4e4e6']],
    [680, 1520, ['e8e8e8', 'f1f1f1']]
];

function addPatch(layer, x, y, w, h, colour) {
    const patch = document.createElement('div');
    patch.style.left = x + 'px';
    patch.style.top = y + 'px';
    patch.style.width = w + 'px';
    patch.style.height = h + 'px';
    patch.style.backgroundColor = '#' + colour;
    layer.appendChild(patch);
}

function renderRedaction() {
    const layer = document.getElementById('redaction');
    smears.forEach(s => addPatch(layer, s[0], s[1], s[2], s[3], s[4]));
    tiles.forEach(line => {
        line[2].forEach((colour, i) => addPatch(layer, line[1] + i * 20, line[0], 20, 20, colour));
    });
}

renderRows();
renderRedaction();
```
